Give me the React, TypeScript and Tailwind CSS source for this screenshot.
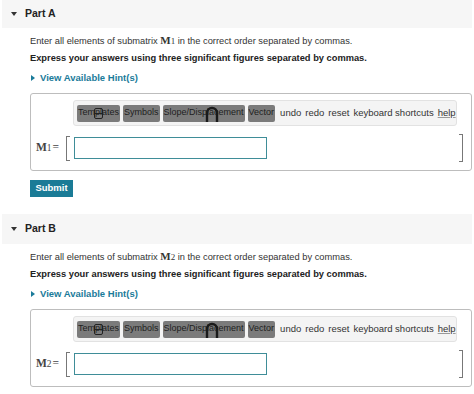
import React from "react";

function Caret({ open }: { open: boolean }) {
  return open ? (
    <span className="inline-block h-0 w-0 border-x-[3px] border-t-[4px] border-x-transparent border-t-[#333]" />
  ) : (
    <span className="inline-block h-0 w-0 border-y-[3px] border-l-[4px] border-y-transparent border-l-[#1a7b9a]" />
  );
}

function ToolButton({ label, children }: { label: string; children?: React.ReactNode }) {
  return (
    <span className="relative flex h-[17px] items-center whitespace-nowrap rounded-[2px] bg-[#7b7b7b] px-[1px] text-[9px] text-[#1e1e1e]">
      {label}
      {children}
    </span>
  );
}

function AnswerBox({ n }: { n: string }) {
  return (
    <div className="mr-[2px] h-[78px] rounded-[3px] border border-[#bdbdbd] pt-[6px]">
      <div className="ml-[42px] flex h-[26px] w-[384px] items-center gap-[3px] rounded-[3px] border border-[#e2e2e2] bg-[#f4f4f4] pl-[3px]">
        <ToolButton label="Templates">
          <svg className="absolute left-[17px] top-[3px]" width="9" height="11" viewBox="0 0 9 11" fill="none" stroke="#222" strokeWidth="1">
            <rect x="0.5" y="0.5" width="8" height="10" rx="1.5" />
            <path d="M1 5.5h7" />
          </svg>
        </ToolButton>
        <ToolButton label="Symbols" />
        <ToolButton label="Slope/Displacement">
          <svg className="absolute left-[42px] top-[1px]" width="14" height="16" viewBox="0 0 14 16" fill="none" stroke="#1a1a1a" strokeWidth="2.4">
            <path d="M2 16V7a5 5 0 0 1 10 0v9" />
          </svg>
        </ToolButton>
        <ToolButton label="Vector" />
        <span className="ml-[2px] flex items-center gap-[4px] whitespace-nowrap text-[9.5px] text-[#333]">
          <span>undo</span>
          <span>redo</span>
          <span>reset</span>
          <span>keyboard shortcuts</span>
          <span className="underline decoration-[#999]">help</span>
        </span>
      </div>
      <div className="mt-[8px] flex items-center">
        <span className="ml-[5px] w-[30px] whitespace-nowrap font-['Liberation_Serif',serif] text-[11.5px] text-[#444]">
          <b>M</b>
          <span className="text-[9.5px]">{n}</span>
          <span className="ml-[1px]">=</span>
        </span>
        <span className="h-[25px] w-[4px] border-y border-l border-[#777]" />
        <span className="ml-[4px] h-[22px] w-[193px] border border-[#3f8d98] bg-white" />
        <span className="ml-auto mr-[8px] h-[28px] w-[4px] border-y border-r border-[#777]" />
      </div>
    </div>
  );
}

function Part({ name, n, submit, tall }: { name: string; n: string; submit?: boolean; tall?: boolean }) {
  return (
    <section>
      <div className={"mx-[2px] flex items-center gap-[8px] bg-[#f6f6f6] pl-[9px] " + (tall ? "h-[30px]" : "h-[28px]")}>
        <Caret open />
        <span className="text-[10.5px] font-bold text-[#222]">{name}</span>
      </div>
      <div className="pl-[30px]">
        <p className="mt-[5px] h-[14px] text-[9.3px] leading-[14px] text-[#333]">
          Enter all elements of submatrix{" "}
          <span className="font-['Liberation_Serif',serif] text-[11px]">
            <b>M</b>
            <span className="text-[9px]">{n}</span>
          </span>{" "}
          in the correct order separated by commas.
        </p>
        <p className="mt-[4px] h-[14px] text-[9.3px] font-bold leading-[14px] text-[#222]">
          Express your answers using three significant figures separated by commas.
        </p>
        <div className="mt-[6px] flex h-[14px] items-center gap-[5px] pl-[1px] text-[9.5px] font-bold text-[#1a7b9a]">
          <Caret open={false} />
          <span>View Available Hint(s)</span>
        </div>
        <div className="mt-[8px]">
          <AnswerBox n={n} />
        </div>
        {submit && (
          <button className="mt-[9px] flex h-[17px] w-[43px] items-center justify-center bg-[#1a7b96] text-[9.5px] font-bold text-white">
            Submit
          </button>
        )}
      </div>
    </section>
  );
}

export default function App() {
  return (
    <div className="h-[394px] w-[474px] overflow-hidden bg-white font-['Liberation_Sans',Arial,sans-serif]">
      <Part name="Part A" n="1" submit />
      <div className="h-[17px]" />
      <Part name="Part B" n="2" tall />
    </div>
  );
}
